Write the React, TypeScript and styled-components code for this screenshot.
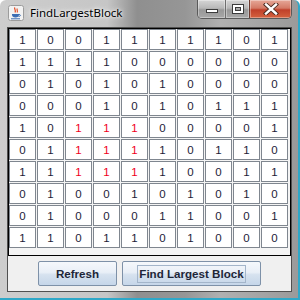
import React from "react";
import styled, { createGlobalStyle } from "styled-components";

const GlobalStyle = createGlobalStyle`
  html, body {
    margin: 0;
    padding: 0;
    width: 300px;
    height: 300px;
    overflow: hidden;
    background: #ffffff;
  }
`;

const BOARD = [
  "1001111101",
  "1111000000",
  "0101010000",
  "0001010111",
  "1011100001",
  "0111110110",
  "1111110011",
  "0100101010",
  "0100011001",
  "1101101000",
];

const isInBlock = (r: number, c: number) => r >= 4 && r <= 6 && c >= 2 && c <= 4;

const Window = styled.div`
  width: 300px;
  height: 300px;
  box-sizing: border-box;
  display: flex;
  flex-direction: column;
  border-radius: 6px 6px 0 0;
  background: linear-gradient(
    to right,
    #cdcdcd 0%,
    #c6c6c6 36%,
    #8f8f8f 46%,
    #969696 62%,
    #b0b0b0 74%,
    #9a9a9a 100%
  );
  border-right: 2px solid #2fa8c8;
  border-bottom: 2px solid #2fa8c8;
  overflow: hidden;
`;

const TitleBar = styled.div`
  height: 27px;
  display: flex;
  flex-direction: row;
  align-items: flex-start;
  flex-shrink: 0;
`;

const IconBox = styled.div`
  width: 16px;
  height: 16px;
  margin: 5px 0 0 8px;
`;

const Title = styled.div`
  margin: 5px 0 0 6px;
  font-family: "Noto Sans", "Liberation Sans", sans-serif;
  font-size: 11.5px;
  line-height: 16px;
  color: #000000;
  text-shadow: 0 0 6px #ffffff, 0 0 3px #ffffff;
`;

const Spacer = styled.div`
  flex: 1;
`;

const CaptionGroup = styled.div`
  display: flex;
  flex-direction: row;
  margin-right: 6px;
  border: 1px solid #5a5a5a;
  border-top: none;
  border-radius: 0 0 5px 5px;
  overflow: hidden;
  height: 18px;
`;

const CaptionButton = styled.div<{ $w: number; $close?: boolean }>`
  width: ${(p) => p.$w}px;
  height: 18px;
  display: flex;
  align-items: center;
  justify-content: center;
  box-sizing: border-box;
  border-left: ${(p) => (p.$close ? "1px solid #6a3a30" : "1px solid #6e6e6e")};
  box-shadow: inset 0 0 0 1px rgba(255, 255, 255, 0.35);
  background: ${(p) =>
    p.$close
      ? "linear-gradient(to bottom, #e6a898 0%, #d47a66 45%, #c0402a 55%, #d4623e 100%)"
      : "linear-gradient(to bottom, #d6d6d6 0%, #b8b8b8 45%, #989898 55%, #a8a8a8 100%)"};
  &:first-child {
    border-left: none;
  }
`;

const Client = styled.div`
  flex: 1;
  margin: 0 6px 6px 7px;
  border: 1px solid #505050;
  background: #f0f0f0;
  display: flex;
  flex-direction: column;
`;

const GridPanel = styled.div`
  height: 228px;
  box-sizing: border-box;
  border: 1px solid #000000;
  display: grid;
  grid-template-columns: repeat(10, 27px);
  grid-template-rows: repeat(10, 21px);
  gap: 1px;
  align-content: start;
  background: #f4f4f4;
`;

const Cell = styled.div<{ $hot: boolean }>`
  box-sizing: border-box;
  border: 1px solid #7f868f;
  background: #ffffff;
  display: flex;
  align-items: center;
  justify-content: center;
  font-family: "Liberation Sans", Arial, sans-serif;
  font-size: 11.5px;
  padding-top: 1px;
  color: ${(p) => (p.$hot ? "#f0001c" : "#1c1c38")};
`;

const ButtonBar = styled.div`
  flex: 1;
  display: flex;
  flex-direction: row;
  justify-content: center;
  align-items: flex-start;
  gap: 5px;
  padding-top: 5px;
`;

const Button = styled.div<{ $w: number }>`
  width: ${(p) => p.$w}px;
  height: 25px;
  box-sizing: border-box;
  border: 1px solid #7e91a8;
  border-radius: 2px;
  background: linear-gradient(
    to bottom,
    #f5f8fc 0%,
    #e9eff7 45%,
    #d6e2ef 55%,
    #c6d6e9 100%
  );
  display: flex;
  align-items: center;
  justify-content: center;
  font-family: "Liberation Sans", Arial, sans-serif;
  font-weight: bold;
  font-size: 11.6px;
  color: #1e2638;
`;

const FocusLabel = styled.span`
  border: 1px solid #a3b5ca;
  padding: 0 1px;
  line-height: 16px;
`;

const JavaIcon = () => (
  <svg width="16" height="16" viewBox="0 0 16 16">
    <rect x="0.5" y="0.5" width="15" height="15" rx="2" fill="#f2f2f2" stroke="#9c9c9c" />
    <path d="M7 2.5 C5.5 4, 8.5 5, 7 7.5" stroke="#e0461e" strokeWidth="1.2" fill="none" />
    <path d="M9.3 3.5 C8.3 5, 10.3 5.8, 9 7.5" stroke="#e0461e" strokeWidth="1.1" fill="none" />
    <path d="M4 9 H11 V9.8 C11 11.6 9.6 12.4 7.5 12.4 C5.4 12.4 4 11.6 4 9.8 Z" fill="#3b6db3" />
    <path d="M11 9.6 C13 9.4 13 11.4 10.6 11.5" stroke="#3b6db3" strokeWidth="1" fill="none" />
    <path d="M3 13.8 H12" stroke="#3b6db3" strokeWidth="1" />
  </svg>
);

const MinGlyph = () => (
  <svg width="14" height="10" viewBox="0 0 14 10">
    <rect x="1.5" y="5.5" width="11" height="3" fill="#ffffff" stroke="#3c3c3c" />
  </svg>
);

const MaxGlyph = () => (
  <svg width="14" height="11" viewBox="0 0 14 11">
    <rect x="1.5" y="0.5" width="11" height="9" fill="none" stroke="#3c3c3c" />
    <rect x="3" y="2" width="8" height="6" fill="none" stroke="#ffffff" strokeWidth="2" />
    <rect x="4.5" y="3.5" width="5" height="3" fill="none" stroke="#3c3c3c" />
  </svg>
);

const CloseGlyph = () => (
  <svg width="16" height="12" viewBox="0 0 16 12">
    <path d="M3 1.5 L13 10.5 M13 1.5 L3 10.5" stroke="#4a2a20" strokeWidth="4.2" strokeLinecap="square" />
    <path d="M3 1.5 L13 10.5 M13 1.5 L3 10.5" stroke="#ffffff" strokeWidth="2.4" strokeLinecap="square" />
  </svg>
);

const App: React.FC = () => {
  return (
    <>
      <GlobalStyle />
      <Window>
        <TitleBar>
          <IconBox>
            <JavaIcon />
          </IconBox>
          <Title>FindLargestBlock</Title>
          <Spacer />
          <CaptionGroup>
            <CaptionButton $w={27}>
              <MinGlyph />
            </CaptionButton>
            <CaptionButton $w={24}>
              <MaxGlyph />
            </CaptionButton>
            <CaptionButton $w={42} $close>
              <CloseGlyph />
            </CaptionButton>
          </CaptionGroup>
        </TitleBar>
        <Client>
          <GridPanel>
            {BOARD.map((row, r) =>
              row.split("").map((v, c) => (
                <Cell key={`${r}-${c}`} $hot={isInBlock(r, c)}>
                  {v}
                </Cell>
              ))
            )}
          </GridPanel>
          <ButtonBar>
            <Button $w={79}>Refresh</Button>
            <Button $w={139}>
              <FocusLabel>Find Largest Block</FocusLabel>
            </Button>
          </ButtonBar>
        </Client>
      </Window>
    </>
  );
};

export default App;
